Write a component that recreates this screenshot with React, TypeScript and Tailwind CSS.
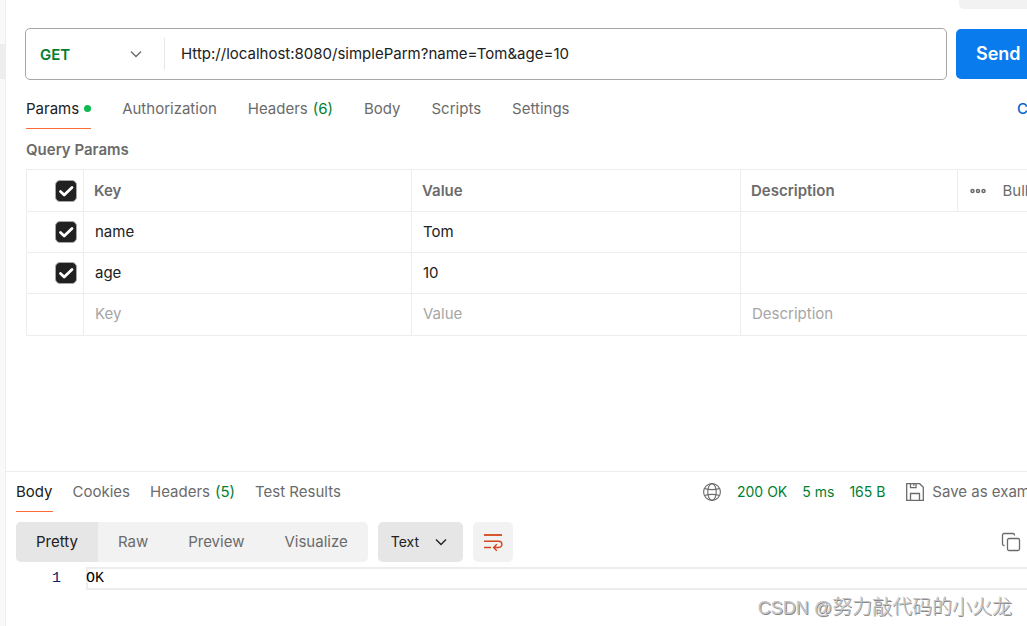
import type { ReactNode } from "react";

/** Query params shown in the editable table. */
const PARAMS = [
  { key: "name", value: "Tom" },
  { key: "age", value: "10" },
];

const REQUEST_TABS: { label: string; count?: number; dot?: boolean }[] = [
  { label: "Params", dot: true },
  { label: "Authorization" },
  { label: "Headers", count: 6 },
  { label: "Body" },
  { label: "Scripts" },
  { label: "Settings" },
];

const RESPONSE_TABS: { label: string; count?: number }[] = [
  { label: "Body" },
  { label: "Cookies" },
  { label: "Headers", count: 5 },
  { label: "Test Results" },
];

const VIEWS = ["Pretty", "Raw", "Preview", "Visualize"];

function Tab({
  label,
  count,
  dot,
  active,
}: {
  label: string;
  count?: number;
  dot?: boolean;
  active: boolean;
}) {
  return (
    <button
      type="button"
      role="tab"
      aria-selected={active}
      className={
        active
          ? "flex h-10 items-center gap-[5px] border-b border-[#ff6c37] text-[#212121]"
          : "flex h-10 items-center gap-[5px] border-b border-transparent text-[#6b6b6b]"
      }
    >
      {label}
      {count !== undefined && <span className="text-[#007f31]">({count})</span>}
      {dot && <span className="size-[7px] rounded-full bg-[#0cbb52]" />}
    </button>
  );
}

function Chevron({ className }: { className: string }) {
  return (
    <svg viewBox="0 0 12 8" fill="none" stroke="currentColor" strokeWidth="1.4" className={className} aria-hidden>
      <path d="M1 1.5 6 6.5 11 1.5" />
    </svg>
  );
}

function Checkbox({ label }: { label: string }) {
  return (
    <label className="ml-auto mr-[6px] grid size-[22px]">
      <input
        type="checkbox"
        defaultChecked
        aria-label={label}
        className="peer col-start-1 row-start-1 size-[22px] appearance-none rounded-[5px] border border-[#a6a6a6] checked:bg-[#212121]"
      />
      <svg
        viewBox="0 0 22 22"
        fill="none"
        stroke="white"
        strokeWidth="2.8"
        strokeLinecap="round"
        strokeLinejoin="round"
        className="pointer-events-none invisible col-start-1 row-start-1 peer-checked:visible"
        aria-hidden
      >
        <path d="M5.5 11.5 9.2 15 17 7.5" />
      </svg>
    </label>
  );
}

function Cell({ children }: { children: ReactNode }) {
  return <td className="border border-[#ededed] p-0">{children}</td>;
}

// last column runs off the right edge of the pane, so it has no right border
function LastCell({ children }: { children: ReactNode }) {
  return (
    <td colSpan={2} className="border border-r-0 border-[#ededed] p-0">
      {children}
    </td>
  );
}

function CellInput({ label, value, placeholder }: { label: string; value?: string; placeholder?: string }) {
  return (
    <input
      type="text"
      aria-label={label}
      defaultValue={value}
      placeholder={placeholder}
      className="block h-10 w-full px-[11px] pb-[2px] text-[#212121] outline-none placeholder:text-[#a6a6a6]"
    />
  );
}

function RequestBar() {
  return (
    <div className="flex items-center gap-[9px] pl-[19px]">
      <div className="flex h-[52px] min-w-0 flex-1 items-center rounded-[5px] border border-[#a6a6a6]">
        <div className="grid w-[138px] shrink-0 items-center">
          <select
            aria-label="Method"
            className="col-start-1 row-start-1 h-10 appearance-none pl-[14px] pt-[2px] font-semibold text-[#007f31] outline-none"
          >
            <option>GET</option>
          </select>
          <Chevron className="pointer-events-none col-start-1 row-start-1 mr-[22px] h-2 w-3 justify-self-end text-[#6b6b6b]" />
        </div>
        <input
          type="text"
          aria-label="Request URL"
          defaultValue="Http://localhost:8080/simpleParm?name=Tom&age=10"
          className="h-8 min-w-0 flex-1 border-l border-[#e6e6e6] px-4 pb-[2px] text-[#212121] outline-none"
        />
      </div>
      <button
        type="button"
        className="h-[50px] w-[71px] shrink-0 rounded-l-[5px] bg-[#097bed] pl-5 text-left text-lg font-semibold text-white"
      >
        Send
      </button>
    </div>
  );
}

function ParamsTable() {
  return (
    <table className="w-full table-fixed border-collapse">
      <colgroup>
        <col className="w-[57px]" />
        <col className="w-[328px]" />
        <col className="w-[329px]" />
        <col />
        <col className="w-[70px]" />
      </colgroup>
      <thead>
        <tr className="h-[42px] text-left text-[#6b6b6b]">
          <th className="border border-[#ededed] p-0">
            <Checkbox label="Select all" />
          </th>
          <th className="border border-[#ededed] px-[10px] font-semibold">Key</th>
          <th className="border border-[#ededed] px-[10px] font-semibold">Value</th>
          <th className="border border-[#ededed] px-[10px] font-semibold">Description</th>
          <th className="border border-r-0 border-[#ededed] p-0 font-normal">
            <div className="flex items-center gap-[17px] overflow-hidden pl-3">
              <button type="button" aria-label="More options" className="shrink-0">
                <svg viewBox="0 0 16 6" fill="none" stroke="#6b6b6b" strokeWidth="1.5" className="h-[6px] w-4">
                  <circle cx="2.5" cy="3" r="1.5" />
                  <circle cx="8" cy="3" r="1.5" />
                  <circle cx="13.5" cy="3" r="1.5" />
                </svg>
              </button>
              <button type="button" className="whitespace-nowrap">
                Bulk Edit
              </button>
            </div>
          </th>
        </tr>
      </thead>
      <tbody>
        {PARAMS.map((p) => (
          <tr key={p.key} className="h-[41px]">
            <Cell>
              <Checkbox label={`Enable ${p.key}`} />
            </Cell>
            <Cell>
              <CellInput label="Key" value={p.key} />
            </Cell>
            <Cell>
              <CellInput label="Value" value={p.value} />
            </Cell>
            <LastCell>
              <CellInput label="Description" />
            </LastCell>
          </tr>
        ))}
        <tr className="h-[42px]">
          <Cell>{null}</Cell>
          <Cell>
            <CellInput label="New key" placeholder="Key" />
          </Cell>
          <Cell>
            <CellInput label="New value" placeholder="Value" />
          </Cell>
          <LastCell>
            <CellInput label="New description" placeholder="Description" />
          </LastCell>
        </tr>
      </tbody>
    </table>
  );
}

function ResponseMeta() {
  return (
    <div className="ml-auto flex w-[325px] shrink-0 items-center overflow-hidden whitespace-nowrap text-[#007f31]">
      <svg viewBox="0 0 20 20" fill="none" stroke="#6b6b6b" strokeWidth="1.1" className="mr-[15px] size-5 shrink-0" aria-hidden>
        <circle cx="10" cy="10" r="8.4" />
        <ellipse cx="10" cy="10" rx="4.2" ry="8.4" />
        <path d="M2.5 6.5c4.5 1.4 10.5 1.4 15 0M2.5 13.5c4.5-1.4 10.5-1.4 15 0" />
      </svg>
      <span className="mr-[15px] text-sm">200 OK</span>
      <span className="mr-[15px] text-sm">5 ms</span>
      <span className="mr-5 text-sm">165 B</span>
      <button type="button" className="flex items-center gap-[7px] text-[#6b6b6b]">
        <svg viewBox="0 0 20 20" fill="none" stroke="currentColor" strokeWidth="1.3" className="size-5 shrink-0" aria-hidden>
          <path d="M1.7 1.7h13l3.6 3.6v13H1.7zM5.5 1.7v4h5.5v-4M8.8 2v1.8M5.5 18v-6.5h9V18" />
        </svg>
        Save as example
      </button>
    </div>
  );
}

function ResponsePane() {
  return (
    <section className="min-h-[155px] border-t border-[#ededed]">
      <div className="flex h-10 items-center pl-[10px]">
        <div role="tablist" className="flex gap-5 whitespace-nowrap">
          {RESPONSE_TABS.map((t) => (
            <Tab key={t.label} {...t} active={t.label === "Body"} />
          ))}
        </div>
        <ResponseMeta />
      </div>

      <div className="mt-[10px] flex items-center gap-[10px] pl-[10px] pr-[6px]">
        <div className="flex h-10 overflow-hidden rounded-[5px] bg-[#f2f2f2]">
          {VIEWS.map((v) => (
            <button
              key={v}
              type="button"
              aria-pressed={v === "Pretty"}
              className={v === "Pretty" ? "bg-[#e6e6e6] px-5 text-[#212121]" : "px-5 text-[#6b6b6b]"}
            >
              {v}
            </button>
          ))}
        </div>
        <div className="grid w-[85px] items-center rounded-[5px] bg-[#e6e6e6] text-[#212121]">
          <select aria-label="Format" className="col-start-1 row-start-1 h-10 appearance-none pl-[13px] text-sm outline-none">
            <option>Text</option>
          </select>
          <Chevron className="pointer-events-none col-start-1 row-start-1 mr-4 h-2 w-3 justify-self-end" />
        </div>
        <button type="button" aria-label="Wrap lines" className="grid size-10 place-items-center rounded-[5px] bg-[#f2f2f2]">
          <svg viewBox="0 0 20 20" fill="none" stroke="#d1481e" strokeWidth="1.4" className="size-5">
            <path d="M1 3h18" strokeWidth="1.8" />
            <path d="M1 9.3h14.8a2.9 2.9 0 0 1 0 6.2H11M1 15.5h7M13.8 12.3 10.6 15.5l3.2 3.2" />
          </svg>
        </button>
        <button type="button" aria-label="Copy response" className="ml-auto">
          <svg viewBox="0 0 20 20" fill="none" stroke="#6b6b6b" strokeWidth="1.3" className="size-5">
            <rect x="6.5" y="6.5" width="12" height="12" rx="1.5" />
            <path d="M3.5 13.5H3A1.5 1.5 0 0 1 1.5 12V3A1.5 1.5 0 0 1 3 1.5h9A1.5 1.5 0 0 1 13.5 3v.5" />
          </svg>
        </button>
      </div>

      <div className="mt-[5px] flex items-stretch">
        <span className="w-20 pr-[25px] text-right font-['Liberation_Mono',monospace] leading-[23px] text-[#0b216f]">
          1
        </span>
        <code className="flex-1 border-y-2 border-[#ededed] font-['Liberation_Mono',monospace] leading-[19px] text-black shadow-[inset_2px_0_0_#ededed]">
          OK
        </code>
      </div>
    </section>
  );
}

export default function App() {
  return (
    <div className="relative flex min-h-screen overflow-hidden bg-white font-[Inter,sans-serif] text-[15px] leading-5">
      <aside className="w-[6px] shrink-0 border-r border-[#ededed] bg-[#f9f9f9] pt-11">
        <div className="h-[35px] bg-[#ededed]" />
      </aside>

      <main className="flex min-w-0 flex-1 flex-col">
        <section className="flex-1">
          <div className="mb-[19px] ml-auto h-[9px] w-[68px] rounded-bl-[5px] bg-[#f2f2f2]" />
          <RequestBar />
          <div className="mt-[9px] flex items-center justify-between pl-5">
            <div role="tablist" className="flex gap-[31px]">
              {REQUEST_TABS.map((t) => (
                <Tab key={t.label} {...t} active={t.label === "Params"} />
              ))}
            </div>
            <a href="#cookies" className="w-[10px] overflow-hidden font-medium text-[#0265d2]">
              Cookies
            </a>
          </div>
          <div className="pl-5">
            <h2 className="mb-[9px] mt-[11px] font-semibold text-[#6b6b6b]">Query Params</h2>
            <ParamsTable />
          </div>
        </section>
        <ResponsePane />
      </main>

      <div className="pointer-events-none absolute bottom-1 right-[15px] whitespace-nowrap font-['Liberation_Sans','Noto_Sans_CJK_SC',sans-serif] text-xl font-light leading-[30px] text-[#c4c4c4] [text-shadow:1px_1px_0_#8a8a8a]">
        <span className="text-lg">CSDN @</span>努力敲代码的小火龙
      </div>
    </div>
  );
}
